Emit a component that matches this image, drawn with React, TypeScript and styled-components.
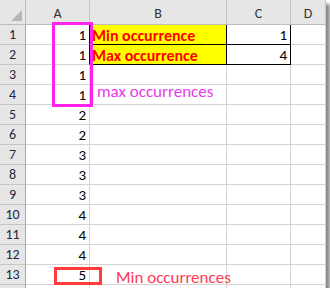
import React from "react";
import styled, { createGlobalStyle } from "styled-components";

const GlobalStyle = createGlobalStyle`
  html, body { margin: 0; padding: 0; background: #ffffff; }
  body { font-family: Carlito, Lato, "Liberation Sans", sans-serif; }
`;

const Wrap = styled.div`
  position: relative;
  width: 326px;
  height: 288px;
  overflow: hidden;
  box-shadow: 4px 4px 3px rgba(0, 0, 0, 0.45);
  background: #ffffff;
`;

const Grid = styled.div`
  display: grid;
  grid-template-columns: 26px 64px 137px 64px 35px;
  grid-template-rows: 25px repeat(14, 20px);
`;

const Corner = styled.div`
  position: relative;
  background: #e6e6e6;
  border-right: 1px solid #bcbcbc;
  border-bottom: 1px solid #bcbcbc;
  box-sizing: border-box;
  &::after {
    content: "";
    position: absolute;
    right: 3px;
    bottom: 3px;
    width: 0;
    height: 0;
    border-left: 11px solid transparent;
    border-bottom: 11px solid #b5b5b5;
  }
`;

const ColHead = styled.div`
  display: flex;
  align-items: center;
  justify-content: center;
  background: #e6e6e6;
  border-right: 1px solid #c6c6c6;
  border-bottom: 1px solid #bcbcbc;
  box-sizing: border-box;
  font-size: 14px;
  color: #333333;
  padding-top: 2px;
`;

const RowHead = styled.div`
  display: flex;
  align-items: center;
  justify-content: center;
  background: #e6e6e6;
  border-right: 1px solid #a8a8a8;
  border-bottom: 1px solid #c6c6c6;
  box-sizing: border-box;
  font-size: 14px;
  color: #262640;
`;

const Cell = styled.div<{ $fill?: string; $right?: boolean; $bold?: boolean; $color?: string; $boxR?: boolean; $boxB?: boolean }>`
  display: flex;
  align-items: center;
  justify-content: ${(p) => (p.$right ? "flex-end" : "flex-start")};
  padding: 1px 3px 0 2px;
  box-sizing: border-box;
  background: ${(p) => p.$fill ?? "#ffffff"};
  border-right: 1px solid ${(p) => (p.$boxR ? "#000000" : "#d4d4d4")};
  border-bottom: 1px solid ${(p) => (p.$boxB ? "#000000" : "#d4d4d4")};
  font-size: ${(p) => (p.$bold ? 16 : 15)}px;
  font-weight: ${(p) => (p.$bold ? 700 : 400)};
  color: ${(p) => p.$color ?? "#000000"};
  white-space: nowrap;
  overflow: visible;
`;

const Frame = styled.div<{ $color: string; $w: number }>`
  position: absolute;
  box-sizing: border-box;
  border: ${(p) => p.$w}px solid ${(p) => p.$color};
`;

const Note = styled.div<{ $color: string }>`
  position: absolute;
  font-size: 17px;
  color: ${(p) => p.$color};
  white-space: nowrap;
`;

const values = [1, 1, 1, 1, 2, 2, 3, 3, 3, 4, 4, 4, 5];

export default function App() {
  return (
    <>
      <GlobalStyle />
      <Wrap>
        <Grid>
          <Corner />
          <ColHead>A</ColHead>
          <ColHead>B</ColHead>
          <ColHead>C</ColHead>
          <ColHead>D</ColHead>
          {values.map((v, i) => {
            const r = i + 1;
            const boxed = r <= 2;
            return (
              <React.Fragment key={r}>
                <RowHead>{r}</RowHead>
                <Cell $right $boxR={boxed}>{v}</Cell>
                {r === 1 && (
                  <Cell $fill="#ffff00" $bold $color="#ff0000" $boxR $boxB>
                    Min occurrence
                  </Cell>
                )}
                {r === 2 && (
                  <Cell $fill="#ffff00" $bold $color="#ff0000" $boxR $boxB>
                    Max occurrence
                  </Cell>
                )}
                {r > 2 && <Cell />}
                {r === 1 && <Cell $right $boxR $boxB>1</Cell>}
                {r === 2 && <Cell $right $boxR $boxB>4</Cell>}
                {r > 2 && <Cell />}
                <Cell />
              </React.Fragment>
            );
          })}
          <RowHead />
          <Cell />
          <Cell />
          <Cell />
          <Cell />
        </Grid>
        <Frame $color="#ff22ee" $w={3} style={{ left: 52, top: 22, width: 41, height: 85 }} />
        <Frame $color="#ff3b3b" $w={3} style={{ left: 54, top: 267, width: 48, height: 18 }} />
        <Note $color="#e83ae8" style={{ left: 97, top: 81 }}>max occurrences</Note>
        <Note $color="#ff3a55" style={{ left: 116, top: 267 }}>Min occurrences</Note>
      </Wrap>
    </>
  );
}
